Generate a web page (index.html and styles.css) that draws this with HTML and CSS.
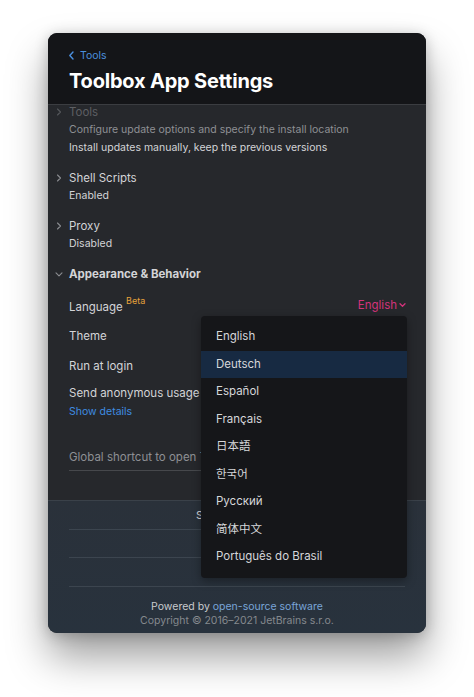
FILE: index.html
```html
<!DOCTYPE html>
<html>
<head>
<meta charset="utf-8">
<link rel="stylesheet" href="styles.css">
</head>
<body>
<div class="page">
<div class="window">
  <header class="header">
    <a class="back"><svg class="back-ico" width="7" height="9" viewBox="0 0 7 9"><path d="M5 1 L1.8 4.5 L5 8" fill="none" stroke="currentColor" stroke-width="1.4" stroke-linecap="round" stroke-linejoin="round"/></svg>Tools</a>
    <h1 class="title">Toolbox App Settings</h1>
  </header>
  <main class="content">
    <section class="group group-first">
      <div class="line head dim"><svg class="chev" width="8" height="8" viewBox="0 0 8 8"><path d="M2.5 1 L5.5 4 L2.5 7" fill="none" stroke="currentColor" stroke-width="1.1" stroke-linecap="round" stroke-linejoin="round"/></svg>Tools</div>
      <div class="line sub muted">Configure update options and specify the install location</div>
      <div class="line sub">Install updates manually, keep the previous versions</div>
    </section>
    <section class="group">
      <div class="line head"><svg class="chev" width="8" height="8" viewBox="0 0 8 8"><path d="M2.5 1 L5.5 4 L2.5 7" fill="none" stroke="currentColor" stroke-width="1.1" stroke-linecap="round" stroke-linejoin="round"/></svg>Shell Scripts</div>
      <div class="line sub">Enabled</div>
    </section>
    <section class="group">
      <div class="line head"><svg class="chev" width="8" height="8" viewBox="0 0 8 8"><path d="M2.5 1 L5.5 4 L2.5 7" fill="none" stroke="currentColor" stroke-width="1.1" stroke-linecap="round" stroke-linejoin="round"/></svg>Proxy</div>
      <div class="line sub">Disabled</div>
    </section>
    <section class="group">
      <div class="line head bold"><svg class="chev" width="8" height="8" viewBox="0 0 8 8"><path d="M1 2.8 L4 5.8 L7 2.8" fill="none" stroke="currentColor" stroke-width="1.1" stroke-linecap="round" stroke-linejoin="round"/></svg>Appearance &amp; Behavior</div>
      <div class="setting s-lang">
        <span>Language <sup class="beta">Beta</sup></span>
        <span class="select">English<svg class="caret" width="7" height="6" viewBox="0 0 7 6"><path d="M1 1.8 L3.5 4.3 L6 1.8" fill="none" stroke="currentColor" stroke-width="1.3" stroke-linecap="round" stroke-linejoin="round"/></svg></span>
      </div>
      <div class="setting s-theme"><span>Theme</span></div>
      <div class="setting s-run"><span>Run at login</span></div>
      <div class="setting s-send"><span class="clip">Send anonymous usage statistics</span></div>
      <div class="line"><a class="link">Show details</a></div>
      <div class="shortcut"><span class="clip">Global shortcut to open Toolbox</span></div>
    </section>
  </main>
  <footer class="footer">
    <div class="frow"><span class="fclip"><span class="ftext">Sync settings</span></span></div>
    <div class="frow"></div>
    <div class="frow"></div>
    <div class="credits">
      <div class="powered">Powered by <a class="oss">open-source software</a></div>
      <div class="copy">Copyright © 2016–2021 JetBrains s.r.o.</div>
    </div>
  </footer>
  <ul class="menu">
    <li class="item">English</li>
    <li class="item active">Deutsch</li>
    <li class="item">Español</li>
    <li class="item">Français</li>
    <li class="item">日本語</li>
    <li class="item">한국어</li>
    <li class="item">Русский</li>
    <li class="item">简体中文</li>
    <li class="item">Português do Brasil</li>
  </ul>
</div>
</div>
</body>
</html>
```
FILE: styles.css
```css
* { box-sizing: border-box; }
html, body { margin: 0; padding: 0; background: #ffffff; }
body {
  font-family: Inter, "Noto Sans CJK SC", "Noto Sans CJK KR", "Noto Sans CJK JP", sans-serif;
  font-size: 11px;
  color: #d3d4d7;
}
.page {
  min-height: 697px;
  padding-top: 33px;
}
.window {
  position: relative;
  width: 378px;
  height: 600px;
  margin: 0 auto;
  border-radius: 9px;
  display: flex;
  flex-direction: column;
  box-shadow: 0 24px 40px rgba(0,0,0,0.38), 0 2px 14px rgba(0,0,0,0.22);
  background: #26282c;
}
.header {
  height: 72px;
  background: #141518;
  border-radius: 9px 9px 0 0;
  padding: 14px 21px 0;
  border-bottom: 1px solid #3b3d41;
}
.back {
  display: flex;
  align-items: center;
  gap: 5px;
  color: #4b8fdd;
  font-size: 10.5px;
  height: 16px;
}
.back-ico { margin-left: -1px; }
.title {
  margin: 5px 0 0;
  font-size: 20px;
  font-weight: 700;
  color: #ffffff;
  letter-spacing: -0.2px;
  line-height: 26px;
}
.content {
  flex: 1;
  padding: 0 21px;
  overflow: hidden;
}
.group { margin-top: 12px; }
.group-first { margin-top: -2px; }
.line { height: 18px; line-height: 18px; position: relative; }
.head { font-size: 11.5px; color: #d3d4d7; }
.bold { font-weight: 700; }
.dim { color: #5d5f63; }
.muted { color: #8e9094; }
.sub { font-size: 10.5px; }
.chev {
  position: absolute;
  left: -14px;
  top: 5px;
  color: #8a8c90;
}
.dim .chev { color: #55575b; }
.setting {
  display: flex;
  justify-content: space-between;
  align-items: center;
  height: 18px;
  font-size: 11.5px;
}
.s-lang { margin-top: 13px; }
.s-theme { margin-top: 13px; }
.s-run { margin-top: 12px; }
.s-send { margin-top: 9px; }
.clip {
  display: block;
  width: 132px;
  overflow: hidden;
  white-space: nowrap;
}
.beta {
  color: #e5a23a;
  font-size: 9px;
  position: relative;
  top: -2px;
}
.select {
  color: #d3337b;
  display: flex;
  align-items: center;
  gap: 2px;
  margin-right: -1px;
}
.link { color: #3f8ce0; font-size: 10.5px; }
.shortcut {
  margin-top: 28px;
  height: 23px;
  line-height: 18px;
  font-size: 11.5px;
  color: #8e9094;
  border-bottom: 1px solid #46484c;
}
.footer {
  height: 133px;
  background: linear-gradient(#2a313a, #28323d);
  border-top: 1px solid #3a4149;
  border-radius: 0 0 9px 9px;
  padding: 0 21px;
  display: flex;
  flex-direction: column;
}
.frow {
  height: 28.5px;
  line-height: 28px;
  font-size: 11px;
  color: #d3d4d7;
  border-bottom: 1px solid #3c454f;
  display: flex;
}
.fclip {
  margin-left: 127px;
  width: 6px;
  overflow: hidden;
  white-space: nowrap;
}
.credits {
  margin-top: 13px;
  text-align: center;
  font-size: 10.5px;
  line-height: 14px;
}
.powered { color: #c8cacd; }
.oss { color: #79a5d8; }
.copy { color: #85898e; }
.menu {
  position: absolute;
  left: 153px;
  top: 283px;
  width: 206px;
  margin: 0;
  padding: 7px 0 7px;
  list-style: none;
  background: #151619;
  border-radius: 4px;
  box-shadow: 0 3px 10px rgba(0,0,0,0.35);
}
.item {
  height: 27.5px;
  line-height: 27.5px;
  padding-left: 15px;
  font-size: 11.5px;
  color: #d6d7da;
}
.item.active { background: #172a42; }
```
